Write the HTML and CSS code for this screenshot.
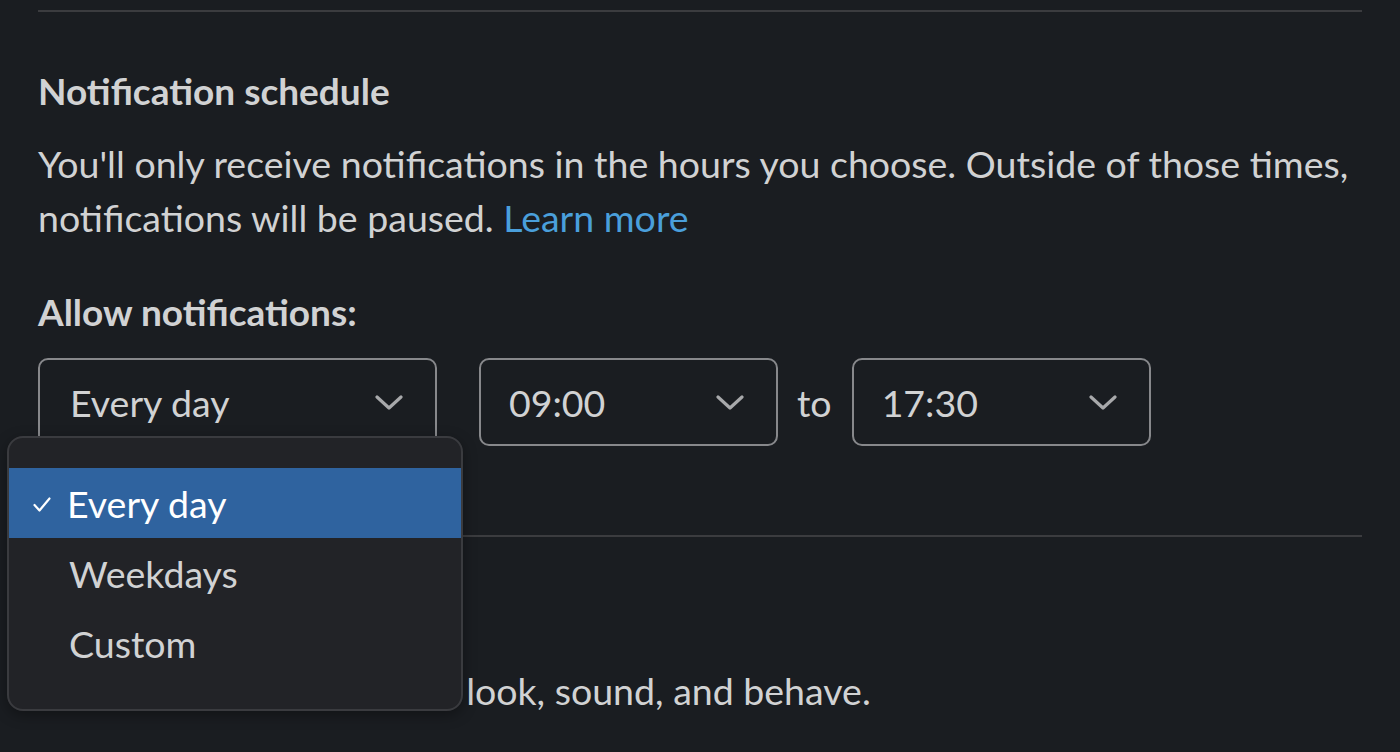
FILE: index.html
```html
<!DOCTYPE html>
<html lang="en">
<head>
<meta charset="utf-8">
<title>Notification schedule</title>
<link rel="stylesheet" href="styles.css">
</head>
<body>
<div class="page">
  <div class="divider"></div>
  <section class="section schedule">
    <h2 class="heading">Notification schedule</h2>
    <p class="desc">You'll only receive notifications in the hours you choose. Outside of those times, notifications will be paused. <a class="link" href="#">Learn more</a></p>
    <h3 class="label">Allow notifications:</h3>
    <div class="row">
      <div class="select-wrap">
        <div class="select select-day">
          <span class="select-text">Every day</span>
          <svg class="chev" viewBox="0 0 28 16" width="28" height="16"><polyline points="2,2 14,13 26,2" fill="none" stroke="currentColor" stroke-width="3.2" stroke-linecap="round" stroke-linejoin="round"/></svg>
        </div>
        <ul class="menu">
          <li class="menu-item selected">
            <svg class="check" viewBox="0 0 18 15" width="18" height="15"><polyline points="1.5,8 6.5,13.5 16.5,1.5" fill="none" stroke="currentColor" stroke-width="2.2" stroke-linecap="round" stroke-linejoin="round"/></svg>
            <span>Every day</span>
          </li>
          <li class="menu-item"><span>Weekdays</span></li>
          <li class="menu-item"><span>Custom</span></li>
        </ul>
      </div>
      <div class="select select-time">
        <span class="select-text">09:00</span>
        <svg class="chev" viewBox="0 0 28 16" width="28" height="16"><polyline points="2,2 14,13 26,2" fill="none" stroke="currentColor" stroke-width="3.2" stroke-linecap="round" stroke-linejoin="round"/></svg>
      </div>
      <span class="to">to</span>
      <div class="select select-time">
        <span class="select-text">17:30</span>
        <svg class="chev" viewBox="0 0 28 16" width="28" height="16"><polyline points="2,2 14,13 26,2" fill="none" stroke="currentColor" stroke-width="3.2" stroke-linecap="round" stroke-linejoin="round"/></svg>
      </div>
    </div>
  </section>
  <div class="divider divider-2"></div>
  <section class="section appearance">
    <h2 class="heading">Sound &amp; appearance</h2>
    <p class="desc">Choose how notifications look, sound, and behave.</p>
  </section>
</div>
</body>
</html>
```

FILE: styles.css
```css
* { box-sizing: border-box; }
html, body {
  margin: 0;
  padding: 0;
  background: #1a1d21;
  height: 100%;
  overflow: hidden;
}
body {
  font-family: Lato, "Noto Sans", sans-serif;
  color: #d1d2d3;
}
.page {
  padding: 10px 38px 0 38px;
  width: 1400px;
}
.divider {
  height: 2px;
  background: #3b3c3f;
  width: 1324px;
}
.section { margin: 0; }
.heading {
  margin: 59px 0 0 0;
  font-size: 37px;
  line-height: 40px;
  font-weight: 700;
  color: #d1d2d3;
}
.desc {
  margin: 26px 0 0 0;
  font-size: 37.5px;
  line-height: 54px;
  color: #d1d2d3;
}
.link {
  color: #4a9fdb;
  text-decoration: none;
}
.label {
  margin: 47px 0 0 0;
  font-size: 37px;
  line-height: 40px;
  font-weight: 700;
}
.row {
  display: flex;
  align-items: center;
  margin-top: 26px;
}
.select-wrap {
  position: relative;
  margin-right: 42px;
}
.select {
  height: 88px;
  border: 2px solid #87888b;
  border-radius: 10px;
  display: flex;
  align-items: center;
  justify-content: space-between;
  padding: 2px 32px 0 30px;
  color: #d1d2d3;
}
.select-day { width: 399px; }
.select-time { width: 299px; padding-left: 28px; }
.select-text {
  font-size: 37.5px;
  line-height: 40px;
}
.chev {
  color: #a8a9ab;
  display: block;
}
.to {
  font-size: 37.5px;
  margin: 2px 20px 0 19px;
  line-height: 40px;
}
.menu {
  position: absolute;
  left: -31px;
  top: 78px;
  width: 456px;
  margin: 0;
  padding: 30px 0 31px 0;
  list-style: none;
  background: #222327;
  border: 2px solid #3a3b3f;
  border-radius: 16px;
  box-shadow: 0 4px 14px rgba(0,0,0,0.35);
  z-index: 5;
}
.menu-item {
  height: 70px;
  display: flex;
  align-items: center;
  padding-left: 60px;
  font-size: 37.5px;
  color: #d1d2d3;
}
.menu-item.selected {
  background: #2f639f;
  color: #ffffff;
  padding-left: 24px;
}
.check {
  display: block;
  margin-right: 16px;
  margin-top: 2px;
}
.divider-2 {
  margin-top: 89px;
}
.appearance .heading {
  margin-top: 56px;
}
.appearance .desc {
  margin-top: 31px;
}
```
